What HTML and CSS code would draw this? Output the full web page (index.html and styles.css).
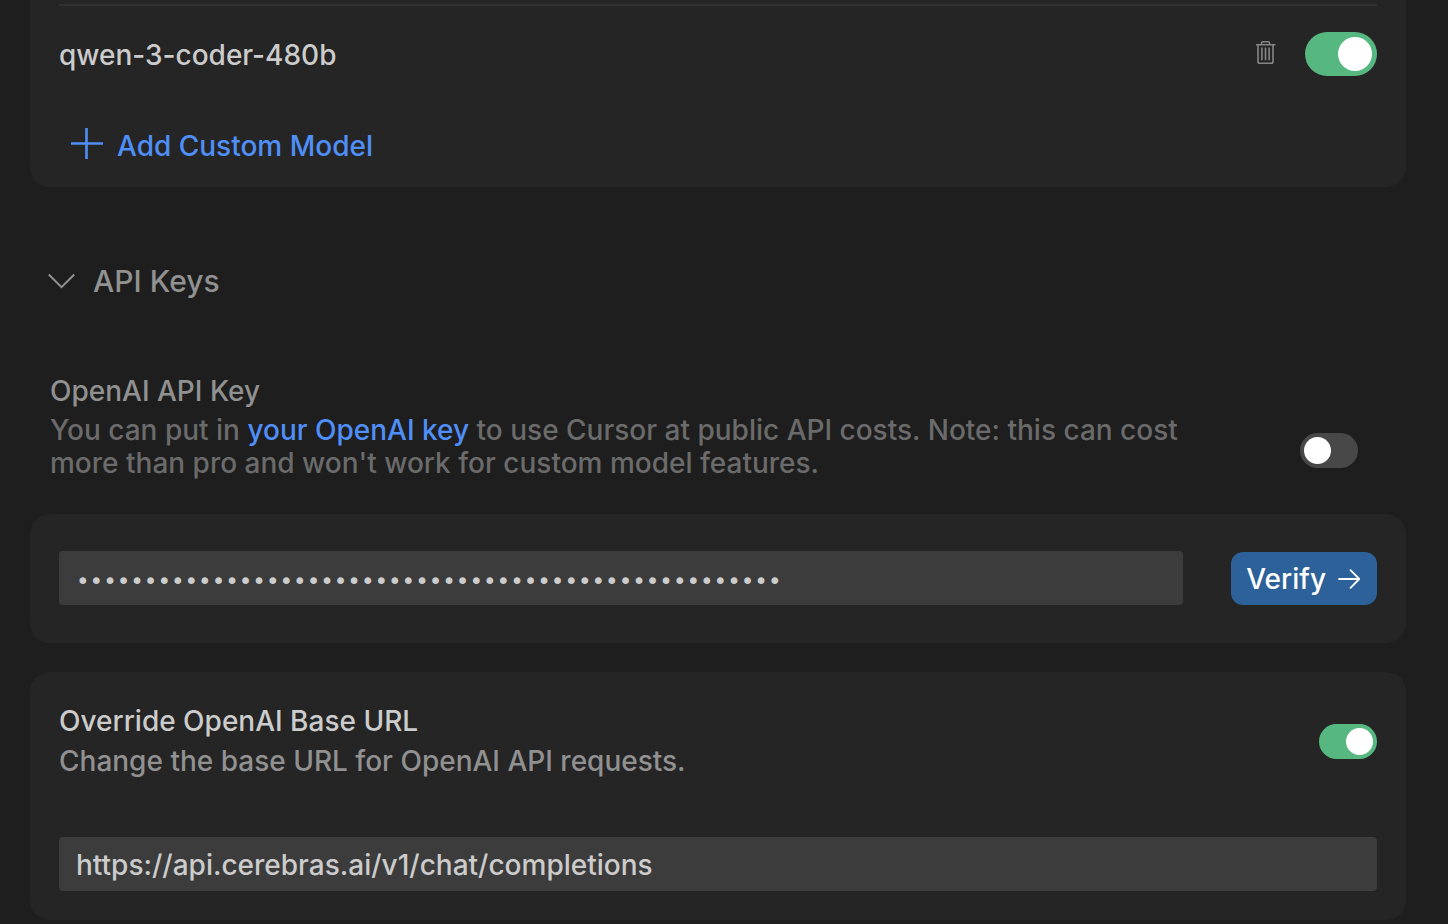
FILE: index.html
```html
<!DOCTYPE html>
<html lang="en">
<head>
<meta charset="utf-8">
<title>Settings</title>
<meta name="viewport" content="width=device-width, initial-scale=1">
<link rel="stylesheet" href="styles.css">
</head>
<body>
<main class="settings">
  <section class="card models">
    <div class="model-row">
      <label class="model-name" for="model-toggle">qwen-3-coder-480b</label>
      <div class="model-actions">
        <button class="icon-button" type="button" aria-label="Delete model">
          <svg width="20" height="24" viewBox="0 0 20 24" fill="none" stroke="currentColor" stroke-width="1.600">
            <path d="M0 3.800h19.500M5.500 3.500V1.900Q5.500.8 6.900.8h5.200q1.400 0 1.400 1.100V3.500M2 4V20.400q0 1.800 1.800 1.800h11.400q1.800 0 1.800-1.800V4M5.900 6.500v12.800M9.500 6.500v12.800M13.100 6.500v12.800"/>
          </svg>
        </button>
        <input class="toggle toggle-large" id="model-toggle" type="checkbox" role="switch" checked>
      </div>
    </div>
    <button class="add-button" type="button">
      <svg width="32" height="32" viewBox="0 0 32 32" fill="none" stroke="currentColor" stroke-width="2.600"><path d="M0 15.500h32M15.500 0v31"/></svg>
      <span>Add Custom Model</span>
    </button>
  </section>

  <button class="section-toggle" type="button" aria-expanded="true">
    <svg width="28" height="16" viewBox="0 0 28 16" fill="none" stroke="currentColor" stroke-width="2"><path d="M.8 1.500 13.500 14.200 26.200 1.500"/></svg>
    <span>API Keys</span>
  </button>

  <section class="key-intro">
    <div class="key-copy">
      <label class="key-title" for="openai-toggle">OpenAI API Key</label>
      <p class="key-note">You can put in <a class="link" href="#">your OpenAI key</a> to use Cursor at public API costs. Note: this can cost more than pro and won't work for custom model features.</p>
    </div>
    <input class="toggle" id="openai-toggle" type="checkbox" role="switch">
  </section>

  <form class="card key-form">
    <input class="field field-secret" type="password" aria-label="OpenAI API key value" value="0000000000000000000000000000000000000000000000000000">
    <button class="verify" type="button">
      <span>Verify</span>
      <svg width="22" height="20" viewBox="0 0 22 20" fill="none" stroke="currentColor" stroke-width="1.800" stroke-linecap="round" stroke-linejoin="round"><path d="M1 10h20M12.500 1.200l8.800 8.800-8.800 8.800"/></svg>
    </button>
  </form>

  <section class="card override">
    <div class="override-head">
      <div class="override-copy">
        <label class="override-title" for="override-toggle">Override OpenAI Base URL</label>
        <p class="override-note">Change the base URL for OpenAI API requests.</p>
      </div>
      <input class="toggle" id="override-toggle" type="checkbox" role="switch" checked>
    </div>
    <input class="field" type="text" aria-label="OpenAI base URL" value="https://api.cerebras.ai/v1/chat/completions">
  </section>
</main>
</body>
</html>
```
FILE: styles.css
```css
* { box-sizing: border-box; }

body {
  margin: 0;
  background: #1e1e1e;
  color: #cccccc;
  font-family: Inter, "Liberation Sans", sans-serif;
  font-size: 28px;
  font-weight: 500;
  line-height: 34px;
}

p { margin: 0; }

button, input { font: inherit; }

button {
  border: 0;
  padding: 0;
  background: none;
  color: inherit;
  cursor: pointer;
}

svg { display: block; flex: none; }

.settings {
  display: flex;
  flex-direction: column;
  padding: 0 42px 4px 30px;
}

.card {
  padding: 29px;
  border-radius: 20px;
  background: #252525;
}

.models {
  padding-top: 4px;
  padding-bottom: 24px;
  border-top-left-radius: 0;
  border-top-right-radius: 0;
}

.model-row {
  display: flex;
  align-items: center;
  justify-content: space-between;
  border-top: 2px solid #313131;
  padding: 26px 0;
}

.model-name { padding-top: 2px; }

.model-actions {
  display: flex;
  align-items: center;
  gap: 29px;
}

.icon-button {
  padding-bottom: 2px;
  color: #858585;
}

.add-button {
  display: flex;
  align-items: flex-start;
  gap: 14px;
  margin-top: 26px;
  padding-left: 12px;
  color: #4f8ff7;
}

.add-button span { padding-top: 1px; }

.section-toggle {
  display: flex;
  align-self: flex-start;
  align-items: center;
  gap: 17px;
  margin-top: 76px;
  margin-left: 18px;
  color: #919191;
  font-size: 30px;
  line-height: 36px;
}

.key-intro {
  display: flex;
  align-items: flex-end;
  justify-content: space-between;
  gap: 80px;
  margin-top: 75px;
  padding: 0 48px 0 20px;
}

.key-intro .toggle { margin-bottom: 12px; }

.key-title {
  display: block;
  margin-bottom: 6px;
  color: #919191;
}

.key-note {
  color: #6b6b6b;
  line-height: 33px;
}

.link {
  color: #4f8ff7;
  text-decoration: none;
}

.key-form {
  display: flex;
  align-items: center;
  gap: 48px;
  margin-top: 34px;
  padding-top: 37px;
  padding-bottom: 38px;
}

.field {
  width: 100%;
  min-width: 0;
  height: 54px;
  border: 0;
  border-radius: 4px;
  padding: 2px 17px 0;
  outline: 0;
  background: #3c3c3c;
  color: #cccccc;
}

.field-secret {
  padding-top: 5px;
  font-family: "DejaVu Sans", sans-serif;
  font-size: 23px;
  font-weight: 400;
}

.verify {
  display: flex;
  flex: none;
  align-items: center;
  gap: 12px;
  height: 53px;
  border-radius: 12px;
  padding: 2px 17px 0 15px;
  background: #2d6199;
  color: #ffffff;
}

.override { margin-top: 29px; }

.override-head {
  display: flex;
  align-items: center;
  justify-content: space-between;
  margin-bottom: 59px;
  padding-top: 3px;
}

.override-title {
  display: block;
  margin-bottom: 6px;
}

.override-note { color: #919191; }

.toggle {
  display: flex;
  flex: none;
  align-items: center;
  appearance: none;
  width: 58px;
  height: 35px;
  margin: 0;
  border-radius: 18px;
  padding: 4px;
  background: #484848;
  cursor: pointer;
}

.toggle::before {
  content: "";
  width: 27px;
  height: 27px;
  border-radius: 50%;
  background: #ffffff;
}

.toggle:checked {
  justify-content: flex-end;
  background: #56b880;
}

.toggle-large {
  width: 72px;
  height: 44px;
  border-radius: 22px;
  padding: 5px;
}

.toggle-large::before {
  width: 34px;
  height: 34px;
}
```
